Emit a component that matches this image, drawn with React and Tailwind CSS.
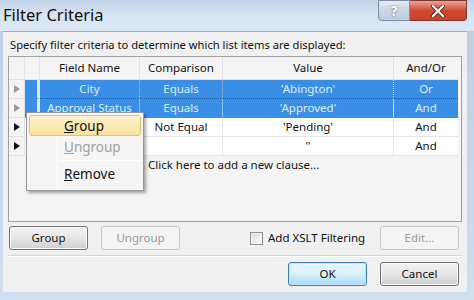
import React from "react";

const font = { fontFamily: '"Noto Sans", "Open Sans", sans-serif' };

const rows = [
  { field: "City", comp: "Equals", value: "'Abington'", op: "Or", selected: true },
  { field: "Approval Status", comp: "Equals", value: "'Approved'", op: "And", selected: true },
  { field: "", comp: "Not Equal", value: "'Pending'", op: "And", selected: false },
  { field: "", comp: "", value: "''", op: "And", selected: false },
];

const Arrow = ({ dim }) => (
  <svg width="6" height="8" viewBox="0 0 6 8">
    <path d="M0 0 L6 4 L0 8 Z" fill={dim ? "#9a9a9a" : "#111"} />
  </svg>
);

const Button = ({ children, disabled, primary, className = "" }) => {
  if (disabled) {
    return (
      <div
        className={`h-[24px] w-[79px] flex items-center justify-center rounded-[3px] border border-[#c5c8cb] bg-[#f4f4f4] text-[11.5px] text-[#9a9a9a] ${className}`}
      >
        {children}
      </div>
    );
  }
  return (
    <div
      className={`h-[24px] w-[79px] flex items-center justify-center rounded-[3px] border text-[11.5px] text-[#111] ${
        primary
          ? "border-[#3c7fb1] bg-gradient-to-b from-[#eaf6fd] via-[#d9f0fc] to-[#a7d9f5] shadow-[inset_0_0_0_1px_#c2e4f6]"
          : "border-[#707070] bg-gradient-to-b from-[#f2f2f2] via-[#e6e6e6] to-[#cfcfcf] shadow-[inset_0_0_0_1px_#fcfcfc]"
      } ${className}`}
    >
      {children}
    </div>
  );
};

export default function App() {
  return (
    <div
      className="w-[474px] h-[300px] overflow-hidden relative bg-gradient-to-b from-[#b9cde4] to-[#cfdff0] flex flex-col"
      style={font}
    >
      {/* title bar */}
      <div className="h-[31px] flex items-start shrink-0 bg-gradient-to-b from-[#c2d4ea] via-[#d7e4f2] to-[#dde8f4]">
        <div className="pl-[3px] pt-[4px] text-[16.5px] text-[#111] leading-[22px]">Filter Criteria</div>
        <div className="ml-auto mr-[7px] flex">
          <div className="w-[32px] h-[21px] flex items-center justify-center border border-[#7d8fa5] rounded-bl-[4px] bg-gradient-to-b from-[#e3ebf4] via-[#c9d6e4] to-[#bccbdc] text-[14px] font-bold text-[#ffffff] [text-shadow:0_0_2px_#445566]">
            ?
          </div>
          <div className="w-[57px] h-[21px] flex items-center justify-center border border-l-0 border-[#7a3a33] rounded-br-[4px] bg-gradient-to-b from-[#e8a493] via-[#cf4a34] to-[#c8412c]">
            <svg width="16" height="12" viewBox="0 0 16 12">
              <path d="M3 1 L13 11 M13 1 L3 11" stroke="#5a1b12" strokeWidth="4" strokeLinecap="round" />
              <path d="M3 1 L13 11 M13 1 L3 11" stroke="#ffffff" strokeWidth="2.4" strokeLinecap="round" />
            </svg>
          </div>
        </div>
      </div>

      {/* body */}
      <div className="mx-[3px] mr-[7px] h-[261px] bg-[#f0f0f0] border-t border-[#9fb1c6] flex flex-col px-[5px]">
        <div className="pt-[5px] pl-[2px] text-[11.2px] text-[#111] leading-[16px]">
          Specify filter criteria to determine which list items are displayed:
        </div>

        {/* grid */}
        <div className="mt-[3px] h-[166px] border border-[#a0a0a0] bg-[#f4f4f4] relative">
          <div className="grid grid-cols-[16px_15px_100px_83px_171px_64px] text-[11.5px] leading-[16px]">
            {/* header */}
            <div className="h-[23px] border-r border-b border-[#e2e2e2] bg-[#f4f4f4]" />
            <div className="h-[23px] border-r border-b border-[#e2e2e2] bg-[#f4f4f4]" />
            <div className="h-[23px] border-r border-b border-[#e2e2e2] flex items-center justify-center text-[#111]">Field Name</div>
            <div className="h-[23px] border-r border-b border-[#e2e2e2] flex items-center justify-center text-[#111]">Comparison</div>
            <div className="h-[23px] border-r border-b border-[#e2e2e2] flex items-center justify-center text-[#111]">Value</div>
            <div className="h-[23px] border-b border-[#e2e2e2] flex items-center justify-center text-[#111]">And/Or</div>

            {rows.map((r, i) => {
              const cell = r.selected
                ? "bg-[#3a8ee6] text-[#dcefff] border-r border-[#8cc0f0]"
                : "bg-white text-[#111] border-r border-[#e6e6e6]";
              const bottom = r.selected
                ? i === 0
                  ? "border-b border-dotted border-b-[#1d5a9c]"
                  : "border-b border-b-[#3a8ee6]"
                : "border-b border-b-[#e6e6e6]";
              return (
                <React.Fragment key={i}>
                  <div className="h-[19px] flex items-center justify-center border-r border-b border-[#e2e2e2] bg-[#f4f4f4]">
                    <Arrow dim={r.selected} />
                  </div>
                  <div
                    className={`h-[19px] border-b ${
                      r.selected
                        ? "bg-[#3a8ee6] border-r-[3px] border-r-[#dce9f5] border-b-[#3a8ee6]"
                        : "bg-white border-r border-[#e6e6e6]"
                    }`}
                  />
                  <div className={`h-[19px] flex items-center justify-center ${cell} ${bottom}`}>{r.field}</div>
                  <div className={`h-[19px] flex items-center justify-center ${cell} ${bottom}`}>{r.comp}</div>
                  <div
                    className={`h-[19px] flex items-center justify-center ${cell} ${bottom} ${
                      r.selected ? "border-r-[#b8e6f5]" : ""
                    }`}
                  >
                    {r.value}
                  </div>
                  <div className={`h-[19px] flex items-center justify-center ${cell} ${bottom} border-r-0`}>{r.op}</div>
                </React.Fragment>
              );
            })}
          </div>
          <div className="pl-[139px] pt-[1px] text-[11.5px] leading-[16px] text-[#111]">
            Click here to add a new clause...
          </div>

          {/* context menu */}
          <div className="absolute left-[17px] top-[55px] w-[118px] h-[79px] bg-[#f5f5f5] border border-[#979797] shadow-[2px_2px_3px_rgba(0,0,0,0.35)] p-[2px] flex flex-col text-[13.5px] leading-[18px]">
            <div className="absolute left-[30px] top-[2px] bottom-[2px] w-[1px] bg-[#e2e3e3] border-r border-white" />
            <div className="relative h-[21px] rounded-[3px] border border-[#e5c365] bg-gradient-to-b from-[#fdf1cd] to-[#fbe39e] flex items-center pl-[34px] text-[#111]">
              <span><span className="underline">G</span>roup</span>
            </div>
            <div className="relative h-[22px] flex items-center pl-[35px] text-[#a0a0a0]">
              <span><span className="underline">U</span>ngroup</span>
            </div>
            <div className="relative ml-[31px] h-[1px] bg-[#e0e0e0] border-b border-white my-[2px]" />
            <div className="relative h-[22px] flex items-center pl-[35px] text-[#111]">
              <span><span className="underline">R</span>emove</span>
            </div>
          </div>
        </div>

        {/* button row */}
        <div className="mt-[4px] flex items-center h-[24px]">
          <Button className="ml-[1px]">Group</Button>
          <Button disabled className="ml-[13px]">Ungroup</Button>
          <div className="ml-[70px] flex items-center">
            <div className="w-[13px] h-[13px] border border-[#8f8f8f] bg-gradient-to-br from-[#dcdcdc] to-[#fbfbfb] shadow-[inset_0_0_0_1px_#f4f4f4]" />
            <span className="ml-[5px] text-[11.5px] text-[#111]">Add XSLT Filtering</span>
          </div>
          <Button disabled className="ml-auto mr-[3px]">Edit...</Button>
        </div>

        <div className="mt-[5px] h-[2px] border-t border-[#d5d5d5] border-b border-b-white" />

        <div className="mt-[5px] flex items-center justify-end gap-[13px] pr-[3px]">
          <Button primary>OK</Button>
          <Button>Cancel</Button>
        </div>
      </div>
    </div>
  );
}
